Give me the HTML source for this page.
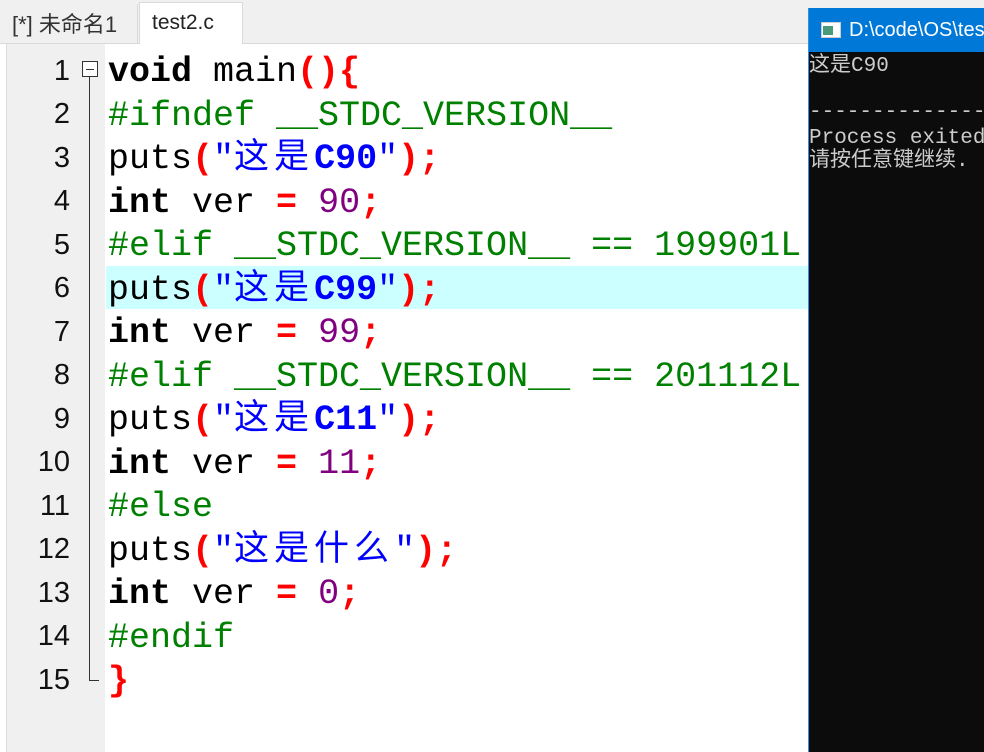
<!DOCTYPE html>
<html><head><meta charset="utf-8"><style>
body{margin:0;width:984px;height:752px;overflow:hidden;background:#fff;position:relative;font-family:"Liberation Sans","Noto Sans CJK SC",sans-serif}
.tabbar{position:absolute;left:0;top:0;width:984px;height:43px;background:#f0f0f0;border-bottom:1px solid #dadada}
.tab1{position:absolute;left:4px;top:4px;height:39px;width:134px;font-size:22px;color:#333;line-height:42px;padding-left:8px;box-sizing:border-box;border-right:1px solid #dadada;white-space:nowrap}
.tab2{position:absolute;left:139px;top:2px;height:42px;width:104px;background:#fff;border:1px solid #dadada;border-bottom:none;font-size:21px;color:#222;line-height:40px;padding-left:12px;box-sizing:border-box}
.gutter{position:absolute;left:6px;top:44px;width:98px;height:708px;background:#f0f0f0;border-left:1px solid #ddd}
.hl{position:absolute;left:106px;top:266px;width:702px;height:43px;background:#ccffff}
.ln{position:absolute;left:0;width:70px;text-align:right;font-size:29px;color:#111;font-family:"Liberation Sans",sans-serif}
.code{position:absolute;left:108px;font-family:"Liberation Mono","Noto Sans CJK SC",monospace;font-size:35px;white-space:pre;line-height:43.5px}
.k{font-weight:bold;color:#000}.p{color:#008000}.r{color:#f00;font-weight:bold}.s{color:#0000ff}.sb{color:#0000ff;font-weight:bold}.n{color:#800080}
.cj{letter-spacing:5px}
.fold{position:absolute;left:82px;top:61px;width:16px;height:16px;border:1px solid #333;box-sizing:border-box;background:#fff}
.fold:after{content:"";position:absolute;left:3px;top:7px;width:8px;height:1px;background:#333}
.vl{position:absolute;left:89px;top:77px;width:1px;height:603px;background:#333}
.hz{position:absolute;left:89px;top:680px;width:10px;height:1px;background:#333}
.con{position:absolute;left:808px;top:8px;width:176px;height:744px;background:#0c0c0c;border-left:1px solid #3a8ee6;overflow:hidden}
.title{height:44px;background:#0078d7;color:#fff;font-size:20px;line-height:44px;padding-left:40px;white-space:nowrap;overflow:hidden;position:relative}
.ico{position:absolute;left:12px;top:14px;width:18px;height:14px;background:#fff;border:1px solid #ccc}
.ico:after{content:"";position:absolute;left:1px;top:3px;width:10px;height:9px;background:#4a9a7a}
.ct{color:#ccc;font-family:"Liberation Mono","Noto Sans CJK SC",monospace;font-size:21px;white-space:pre;line-height:23px;position:absolute;left:0}
</style></head><body>
<div class="tabbar"><div class="tab1">[*] 未命名1</div><div class="tab2">test2.c</div></div>
<div class="gutter"></div>
<div class="hl"></div>
<div class="fold"></div><div class="vl"></div><div class="hz"></div>
<div class="ln" style="top:55px">1</div>
<div class="ln" style="top:98px">2</div>
<div class="ln" style="top:142px">3</div>
<div class="ln" style="top:185px">4</div>
<div class="ln" style="top:229px">5</div>
<div class="ln" style="top:272px">6</div>
<div class="ln" style="top:316px">7</div>
<div class="ln" style="top:359px">8</div>
<div class="ln" style="top:403px">9</div>
<div class="ln" style="top:446px">10</div>
<div class="ln" style="top:490px">11</div>
<div class="ln" style="top:533px">12</div>
<div class="ln" style="top:577px">13</div>
<div class="ln" style="top:620px">14</div>
<div class="ln" style="top:664px">15</div>
<div class="code" style="top:51px"><span class="k">void</span> main<span class="r">(){</span>
<span class="p">#ifndef __STDC_VERSION__</span>
puts<span class="r">(</span><span class="s">"<span class="cj">这是</span><span class="sb">C90</span>"</span><span class="r">);</span>
<span class="k">int</span> ver <span class="r">=</span> <span class="n">90</span><span class="r">;</span>
<span class="p">#elif __STDC_VERSION__ == 199901L</span>
puts<span class="r">(</span><span class="s">"<span class="cj">这是</span><span class="sb">C99</span>"</span><span class="r">);</span>
<span class="k">int</span> ver <span class="r">=</span> <span class="n">99</span><span class="r">;</span>
<span class="p">#elif __STDC_VERSION__ == 201112L</span>
puts<span class="r">(</span><span class="s">"<span class="cj">这是</span><span class="sb">C11</span>"</span><span class="r">);</span>
<span class="k">int</span> ver <span class="r">=</span> <span class="n">11</span><span class="r">;</span>
<span class="p">#else</span>
puts<span class="r">(</span><span class="s">"<span class="cj">这是什么</span>"</span><span class="r">);</span>
<span class="k">int</span> ver <span class="r">=</span> <span class="n">0</span><span class="r">;</span>
<span class="p">#endif</span>
<span class="r">}</span></div>
<div class="con">
<div class="title"><div class="ico"></div>D:\code\OS\test2.exe</div>
<div class="ct" style="top:47px">这是C90</div>
<div class="ct" style="top:93px">--------------------------------</div>
<div class="ct" style="top:119px">Process exited after</div>
<div class="ct" style="top:142px">请按任意键继续. . .</div>
</div>
</body></html>
